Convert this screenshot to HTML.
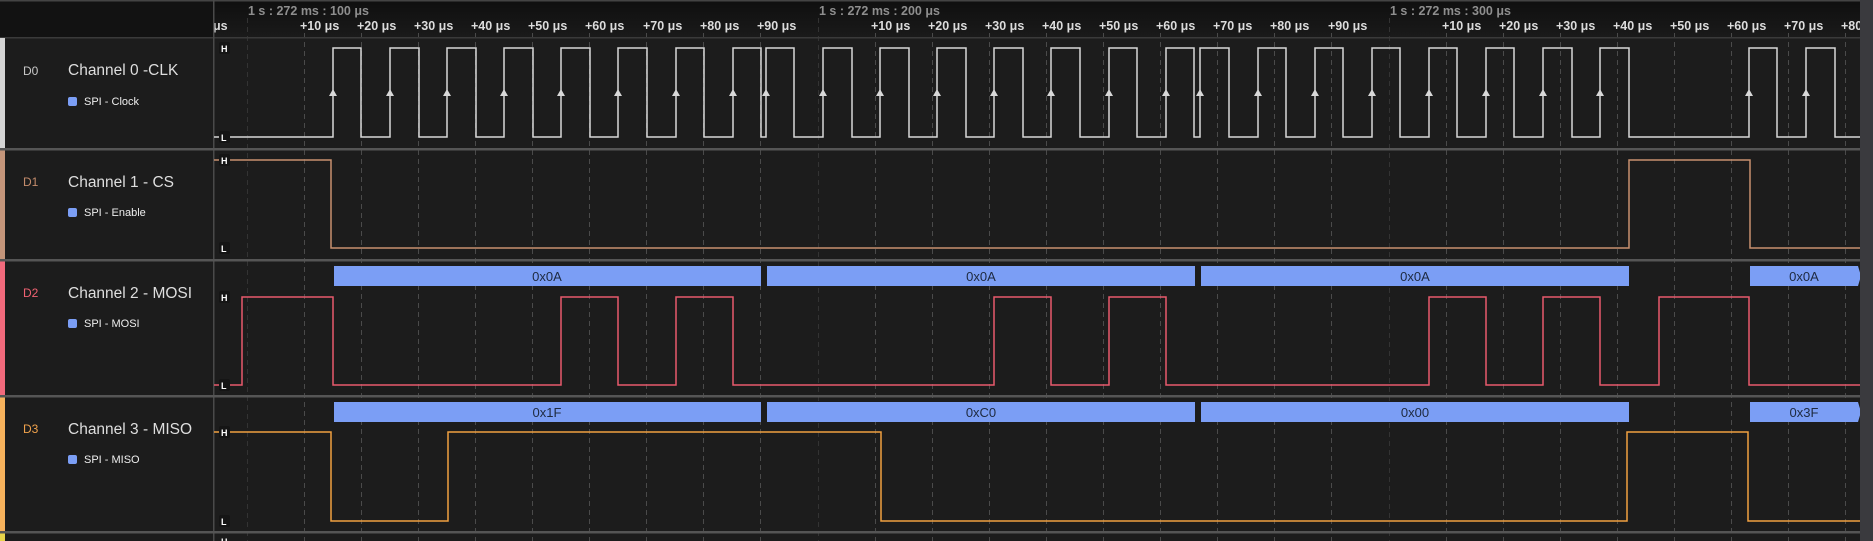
<!DOCTYPE html>
<html><head><meta charset="utf-8"><style>
html,body{margin:0;padding:0;background:#1c1c1c;width:1873px;height:541px;overflow:hidden;font-family:"Liberation Sans",sans-serif}
svg{position:absolute;left:0;top:0}
</style></head><body>
<svg width="1873" height="541" viewBox="0 0 1873 541" xmlns="http://www.w3.org/2000/svg" font-family="Liberation Sans, sans-serif">
<defs><linearGradient id="hg" x1="0" y1="0" x2="0" y2="1"><stop offset="0" stop-color="#0f0f0f"/><stop offset="1" stop-color="#1a1a1a"/></linearGradient></defs>
<rect x="0" y="0" width="1873" height="541" fill="#1c1c1c"/>
<rect x="0" y="0" width="1860" height="37" fill="url(#hg)"/>
<rect x="0" y="0" width="1873" height="1.5" fill="#444"/>
<g stroke="#4a4a4a" stroke-width="1" stroke-dasharray="5,4">
<path d="M304.5 33V541M361.5 33V541M418.5 33V541M475.5 33V541M532.5 33V541M589.5 33V541M646.5 33V541M703.5 33V541M760.5 33V541M875.5 33V541M932.5 33V541M989.5 33V541M1046.5 33V541M1103.5 33V541M1160.5 33V541M1217.5 33V541M1274.5 33V541M1331.5 33V541M1446.5 33V541M1503.5 33V541M1560.5 33V541M1617.5 33V541M1674.5 33V541M1731.5 33V541M1788.5 33V541M1845.5 33V541"/>
</g>
<g stroke="#333" stroke-width="1" stroke-dasharray="5,4"><path d="M247.5 18V541M818.5 18V541M1389.5 18V541"/></g>
<g font-size="12.5" font-weight="bold" fill="#dcdcdc">
<text x="300" y="30">+10 μs</text><text x="357" y="30">+20 μs</text><text x="414" y="30">+30 μs</text><text x="471" y="30">+40 μs</text><text x="528" y="30">+50 μs</text><text x="585" y="30">+60 μs</text><text x="643" y="30">+70 μs</text><text x="700" y="30">+80 μs</text><text x="757" y="30">+90 μs</text>
<text x="871" y="30">+10 μs</text><text x="928" y="30">+20 μs</text><text x="985" y="30">+30 μs</text><text x="1042" y="30">+40 μs</text><text x="1099" y="30">+50 μs</text><text x="1156" y="30">+60 μs</text><text x="1213" y="30">+70 μs</text><text x="1270" y="30">+80 μs</text><text x="1328" y="30">+90 μs</text>
<text x="1442" y="30">+10 μs</text><text x="1499" y="30">+20 μs</text><text x="1556" y="30">+30 μs</text><text x="1613" y="30">+40 μs</text><text x="1670" y="30">+50 μs</text><text x="1727" y="30">+60 μs</text><text x="1784" y="30">+70 μs</text><text x="1841" y="30">+80 μs</text>
</g>
<g font-size="12.5" font-weight="bold" fill="#8e8e8e">
<text x="248" y="15">1 s : 272 ms : 100 μs</text>
<text x="819" y="15">1 s : 272 ms : 200 μs</text>
<text x="1390" y="15">1 s : 272 ms : 300 μs</text>
</g>
<rect x="0" y="1.5" width="213" height="35.5" fill="#121212"/>
<text x="213" y="30" font-size="12.5" font-weight="bold" fill="#dcdcdc">μs</text>
<rect x="0" y="37" width="1860" height="1.5" fill="#3a3a3a"/>
<rect x="0" y="38.5" width="213" height="503" fill="#1c1c1c"/>
<rect x="213" y="0" width="1.5" height="541" fill="#4a4a4a"/>
<g fill="#555"><rect x="0" y="148" width="1860" height="2.5"/><rect x="0" y="259" width="1860" height="2.5"/><rect x="0" y="395" width="1860" height="2.5"/><rect x="0" y="531" width="1860" height="2.5"/></g>
<rect x="0" y="38" width="5" height="110" fill="#d4d4d4"/>
<rect x="0" y="150.5" width="5" height="108.5" fill="#c4957a"/>
<rect x="0" y="261.5" width="5" height="133.5" fill="#f26a7c"/>
<rect x="0" y="397.5" width="5" height="133.5" fill="#f7b25c"/>
<rect x="0" y="533.5" width="5" height="8" fill="#e8d44a"/>
<g font-size="12"><text x="23" y="75" fill="#c8c8c8">D0</text><text x="23" y="186" fill="#c48c6c">D1</text><text x="23" y="297" fill="#f06272">D2</text><text x="23" y="433" fill="#f0a24c">D3</text></g>
<g font-size="15.5" fill="#dedede"><text x="68" y="75">Channel 0 -CLK</text><text x="68" y="187">Channel 1 - CS</text><text x="68" y="298">Channel 2 - MOSI</text><text x="68" y="434">Channel 3 - MISO</text></g>
<g fill="#7b9ef5"><rect x="68" y="97" width="9" height="9" rx="2"/><rect x="68" y="208" width="9" height="9" rx="2"/><rect x="68" y="319" width="9" height="9" rx="2"/><rect x="68" y="455" width="9" height="9" rx="2"/></g>
<g font-size="11" fill="#eee"><text x="84" y="105">SPI - Clock</text><text x="84" y="216">SPI - Enable</text><text x="84" y="327">SPI - MOSI</text><text x="84" y="463">SPI - MISO</text></g>
<path fill="none" stroke="#d8d8d8" stroke-width="1.5" d="M214 137H333V48H361V137H390V48H419V137H447V48H476V137H504V48H533V137H561V48H590V137H618V48H647V137H676V48H704V137H733V48H761V137H766V48H794V137H823V48H852V137H880V48H909V137H937V48H966V137H994V48H1023V137H1051V48H1080V137H1109V48H1137V137H1166V48H1194V137H1200V48H1229V137H1258V48H1286V137H1315V48H1343V137H1372V48H1400V137H1429V48H1457V137H1486V48H1514V137H1543V48H1572V137H1600V48H1629V137H1749V48H1777V137H1806V48H1835V137H1860"/>
<g fill="#d8d8d8"><path d="M329 96h8l-4-7zM386 96h8l-4-7zM443 96h8l-4-7zM500 96h8l-4-7zM557 96h8l-4-7zM614 96h8l-4-7zM672 96h8l-4-7zM729 96h8l-4-7zM762 96h8l-4-7zM819 96h8l-4-7zM876 96h8l-4-7zM933 96h8l-4-7zM990 96h8l-4-7zM1047 96h8l-4-7zM1105 96h8l-4-7zM1162 96h8l-4-7zM1196 96h8l-4-7zM1254 96h8l-4-7zM1311 96h8l-4-7zM1368 96h8l-4-7zM1425 96h8l-4-7zM1482 96h8l-4-7zM1539 96h8l-4-7zM1596 96h8l-4-7zM1745 96h8l-4-7zM1802 96h8l-4-7z"/></g>
<path fill="none" stroke="#c8906e" stroke-width="1.5" d="M214 160H331V248H1629V160H1750V248H1860"/>
<path fill="none" stroke="#e85a6c" stroke-width="1.5" d="M214 385H242V297H333V385H561V297H618V385H676V297H733V385H994V297H1051V385H1109V297H1166V385H1429V297H1486V385H1543V297H1600V385H1659V297H1749V385H1860"/>
<path fill="none" stroke="#f0a040" stroke-width="1.5" d="M214 432H331V521H448V432H881V521H1627V432H1748V521H1860"/>
<g font-size="9" font-weight="bold" fill="#fff">
<rect x="219" y="42" width="11" height="12" rx="2" fill="#151515"/><text x="221" y="52">H</text>
<rect x="219" y="131" width="11" height="12" rx="2" fill="#151515"/><text x="221" y="141">L</text>
<rect x="219" y="154" width="11" height="12" rx="2" fill="#151515"/><text x="221" y="164">H</text>
<rect x="219" y="242" width="11" height="12" rx="2" fill="#151515"/><text x="221" y="252">L</text>
<rect x="219" y="291" width="11" height="12" rx="2" fill="#151515"/><text x="221" y="301">H</text>
<rect x="219" y="379" width="11" height="12" rx="2" fill="#151515"/><text x="221" y="389">L</text>
<rect x="219" y="426" width="11" height="12" rx="2" fill="#151515"/><text x="221" y="436">H</text>
<rect x="219" y="515" width="11" height="12" rx="2" fill="#151515"/><text x="221" y="525">L</text>
<text x="221" y="545">H</text>
</g>
<g fill="#7b9ef5">
<rect x="334" y="266" width="427" height="20"/><rect x="767" y="266" width="428" height="20"/><rect x="1201" y="266" width="428" height="20"/><path d="M1750 266H1858L1861 276L1858 286H1750Z"/>
<rect x="334" y="402" width="427" height="20"/><rect x="767" y="402" width="428" height="20"/><rect x="1201" y="402" width="428" height="20"/><path d="M1750 402H1858L1861 412L1858 422H1750Z"/>
</g>
<g font-size="13" fill="#1e2a40" text-anchor="middle">
<text x="547" y="281">0x0A</text><text x="981" y="281">0x0A</text><text x="1415" y="281">0x0A</text><text x="1804" y="281">0x0A</text>
<text x="547" y="417">0x1F</text><text x="981" y="417">0xC0</text><text x="1415" y="417">0x00</text><text x="1804" y="417">0x3F</text>
</g>
<rect x="1860" y="0" width="13" height="541" fill="#3a3a3e"/>
</svg>
</body></html>
